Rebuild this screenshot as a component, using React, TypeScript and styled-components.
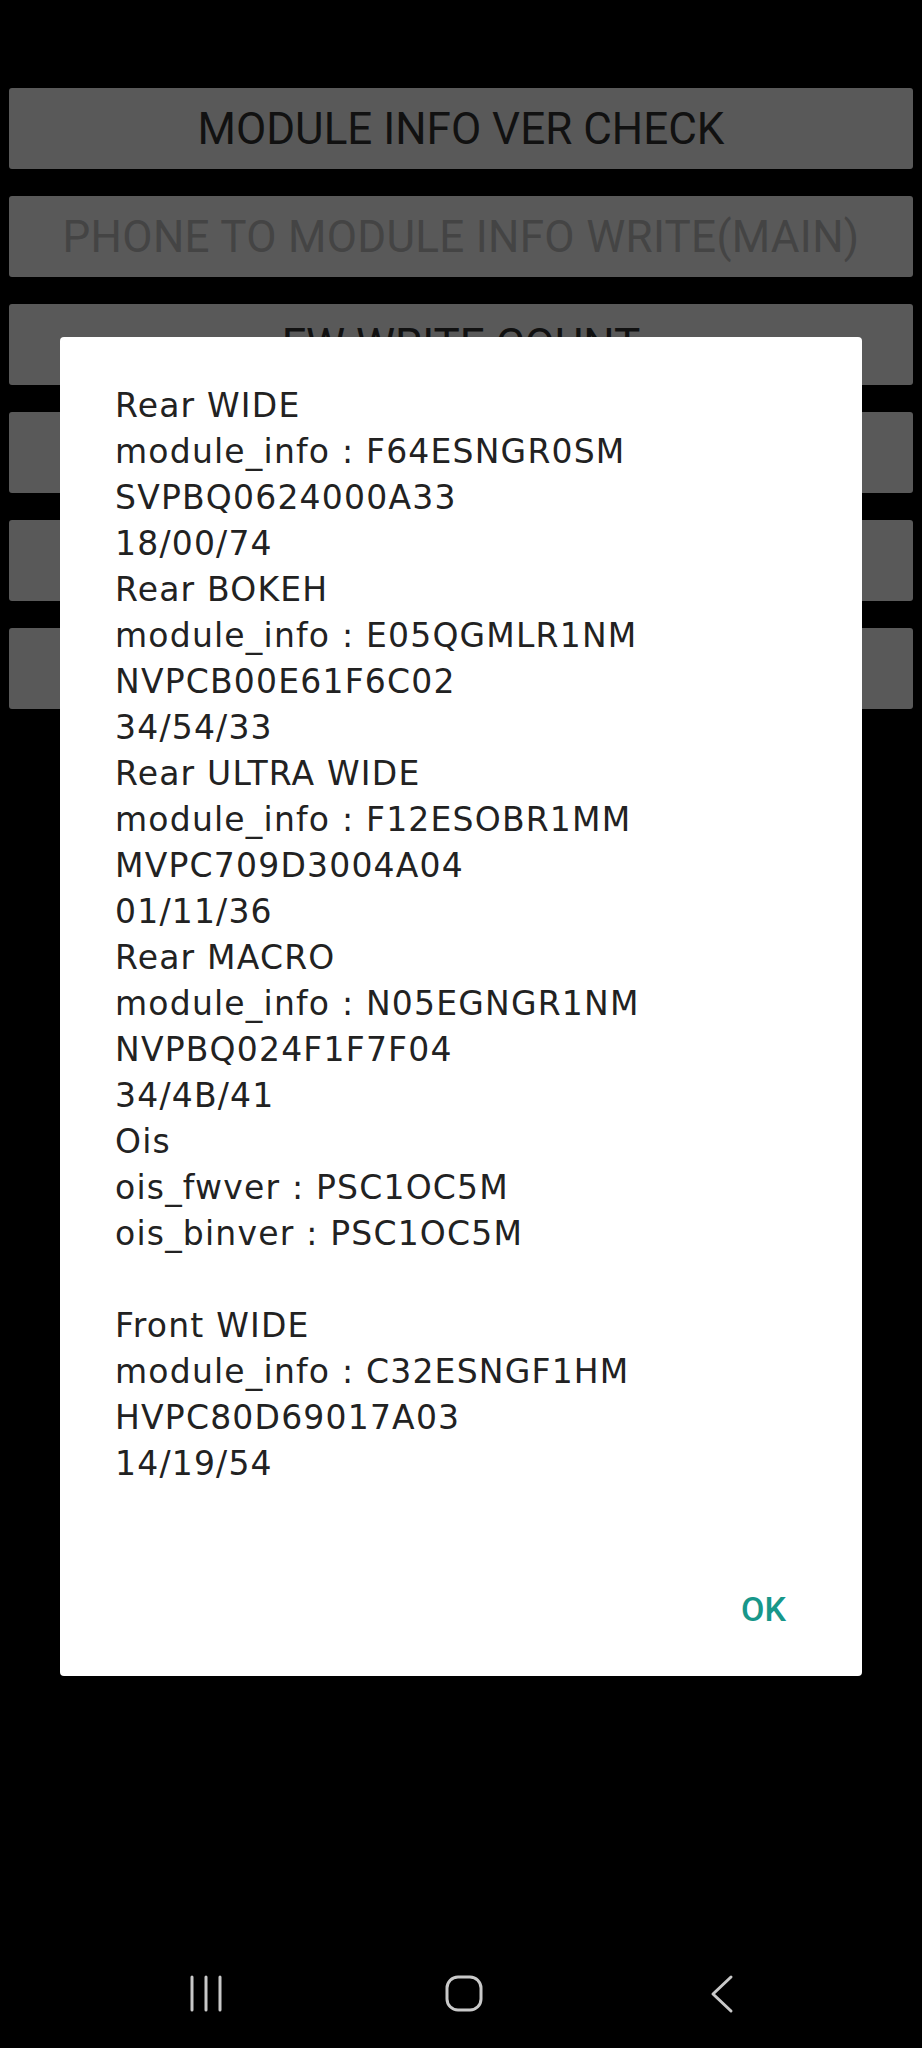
import React from "react";
import styled, { createGlobalStyle } from "styled-components";

const GlobalStyle = createGlobalStyle`
  html, body {
    margin: 0;
    padding: 0;
    background: #000;
  }
  body {
    font-family: Roboto, "Noto Sans", "Liberation Sans", sans-serif;
  }
  * { box-sizing: border-box; }
`;

const Screen = styled.div`
  position: relative;
  width: 922px;
  height: 2048px;
  background: #000;
  overflow: hidden;
  display: flex;
  flex-direction: column;
`;

const ButtonList = styled.div`
  display: flex;
  flex-direction: column;
  gap: 27px;
  padding: 88px 9px 0 9px;
`;

const MenuButton = styled.div<{ $disabled?: boolean }>`
  height: 81px;
  background: #595959;
  border-radius: 3px;
  display: flex;
  align-items: center;
  justify-content: center;
  font-family: Roboto, "Noto Sans", sans-serif;
  font-size: 44px;
  letter-spacing: ${(p) => (p.$disabled ? "0.3px" : "0")};
  color: ${(p) => (p.$disabled ? "#444444" : "#111111")};
  white-space: nowrap;
  overflow: hidden;
`;

const Spacer = styled.div`
  flex: 1;
`;

const NavBar = styled.div`
  height: 108px;
  display: flex;
  align-items: center;
  gap: 218px;
  padding-left: 186px;
`;

const NavSlot = styled.div`
  width: 40px;
  height: 40px;
  display: flex;
  align-items: center;
  justify-content: center;
`;

const Overlay = styled.div`
  position: absolute;
  left: 60px;
  top: 337px;
  width: 802px;
  background: #ffffff;
  border-radius: 4px;
  display: flex;
  flex-direction: column;
  padding: 46px 76px 47px 55px;
`;

const Message = styled.div`
  font-family: "DejaVu Sans", Roboto, sans-serif;
  font-size: 33px;
  line-height: 46px;
  letter-spacing: 1.2px;
  color: #222222;
  white-space: pre;
`;

const ButtonBar = styled.div`
  display: flex;
  justify-content: flex-end;
  margin-top: 102px;
`;

const TextButton = styled.div`
  font-family: Roboto, "Noto Sans", sans-serif;
  font-weight: 500;
  font-size: 34px;
  line-height: 40px;
  color: #17978a;
`;

const lines = [
  "Rear WIDE",
  "module_info : F64ESNGR0SM",
  "SVPBQ0624000A33",
  "18/00/74",
  "Rear BOKEH",
  "module_info : E05QGMLR1NM",
  "NVPCB00E61F6C02",
  "34/54/33",
  "Rear ULTRA WIDE",
  "module_info : F12ESOBR1MM",
  "MVPC709D3004A04",
  "01/11/36",
  "Rear MACRO",
  "module_info : N05EGNGR1NM",
  "NVPBQ024F1F7F04",
  "34/4B/41",
  "Ois",
  "ois_fwver : PSC1OC5M",
  "ois_binver : PSC1OC5M",
  "",
  "Front WIDE",
  "module_info : C32ESNGF1HM",
  "HVPC80D69017A03",
  "14/19/54",
];

const buttons: { label: string; disabled?: boolean }[] = [
  { label: "MODULE INFO VER CHECK" },
  { label: "PHONE TO MODULE INFO WRITE(MAIN)", disabled: true },
  { label: "FW WRITE COUNT" },
  { label: "" },
  { label: "" },
  { label: "" },
];

const iconColor = "#c9c9c9";

const RecentIcon = () => (
  <svg width="40" height="40" viewBox="0 0 40 40">
    <g stroke={iconColor} strokeWidth="3" strokeLinecap="round">
      <line x1="6" y1="3" x2="6" y2="36" />
      <line x1="20" y1="3" x2="20" y2="36" />
      <line x1="34" y1="3" x2="34" y2="36" />
    </g>
  </svg>
);

const HomeIcon = () => (
  <svg width="40" height="40" viewBox="0 0 40 40">
    <rect x="3" y="3" width="34" height="33" rx="11" ry="11" fill="none" stroke={iconColor} strokeWidth="3" />
  </svg>
);

const BackIcon = () => (
  <svg width="40" height="40" viewBox="0 0 40 40">
    <polyline points="29,3 11,20 29,37" fill="none" stroke={iconColor} strokeWidth="3" strokeLinecap="round" strokeLinejoin="round" />
  </svg>
);

export default function App() {
  return (
    <>
      <GlobalStyle />
      <Screen>
        <ButtonList>
          {buttons.map((b, i) => (
            <MenuButton key={i} $disabled={b.disabled}>
              {b.label}
            </MenuButton>
          ))}
        </ButtonList>
        <Spacer />
        <NavBar>
          <NavSlot>
            <RecentIcon />
          </NavSlot>
          <NavSlot>
            <HomeIcon />
          </NavSlot>
          <NavSlot>
            <BackIcon />
          </NavSlot>
        </NavBar>
        <Overlay>
          <Message>{lines.join("\n")}</Message>
          <ButtonBar>
            <TextButton>OK</TextButton>
          </ButtonBar>
        </Overlay>
      </Screen>
    </>
  );
}
